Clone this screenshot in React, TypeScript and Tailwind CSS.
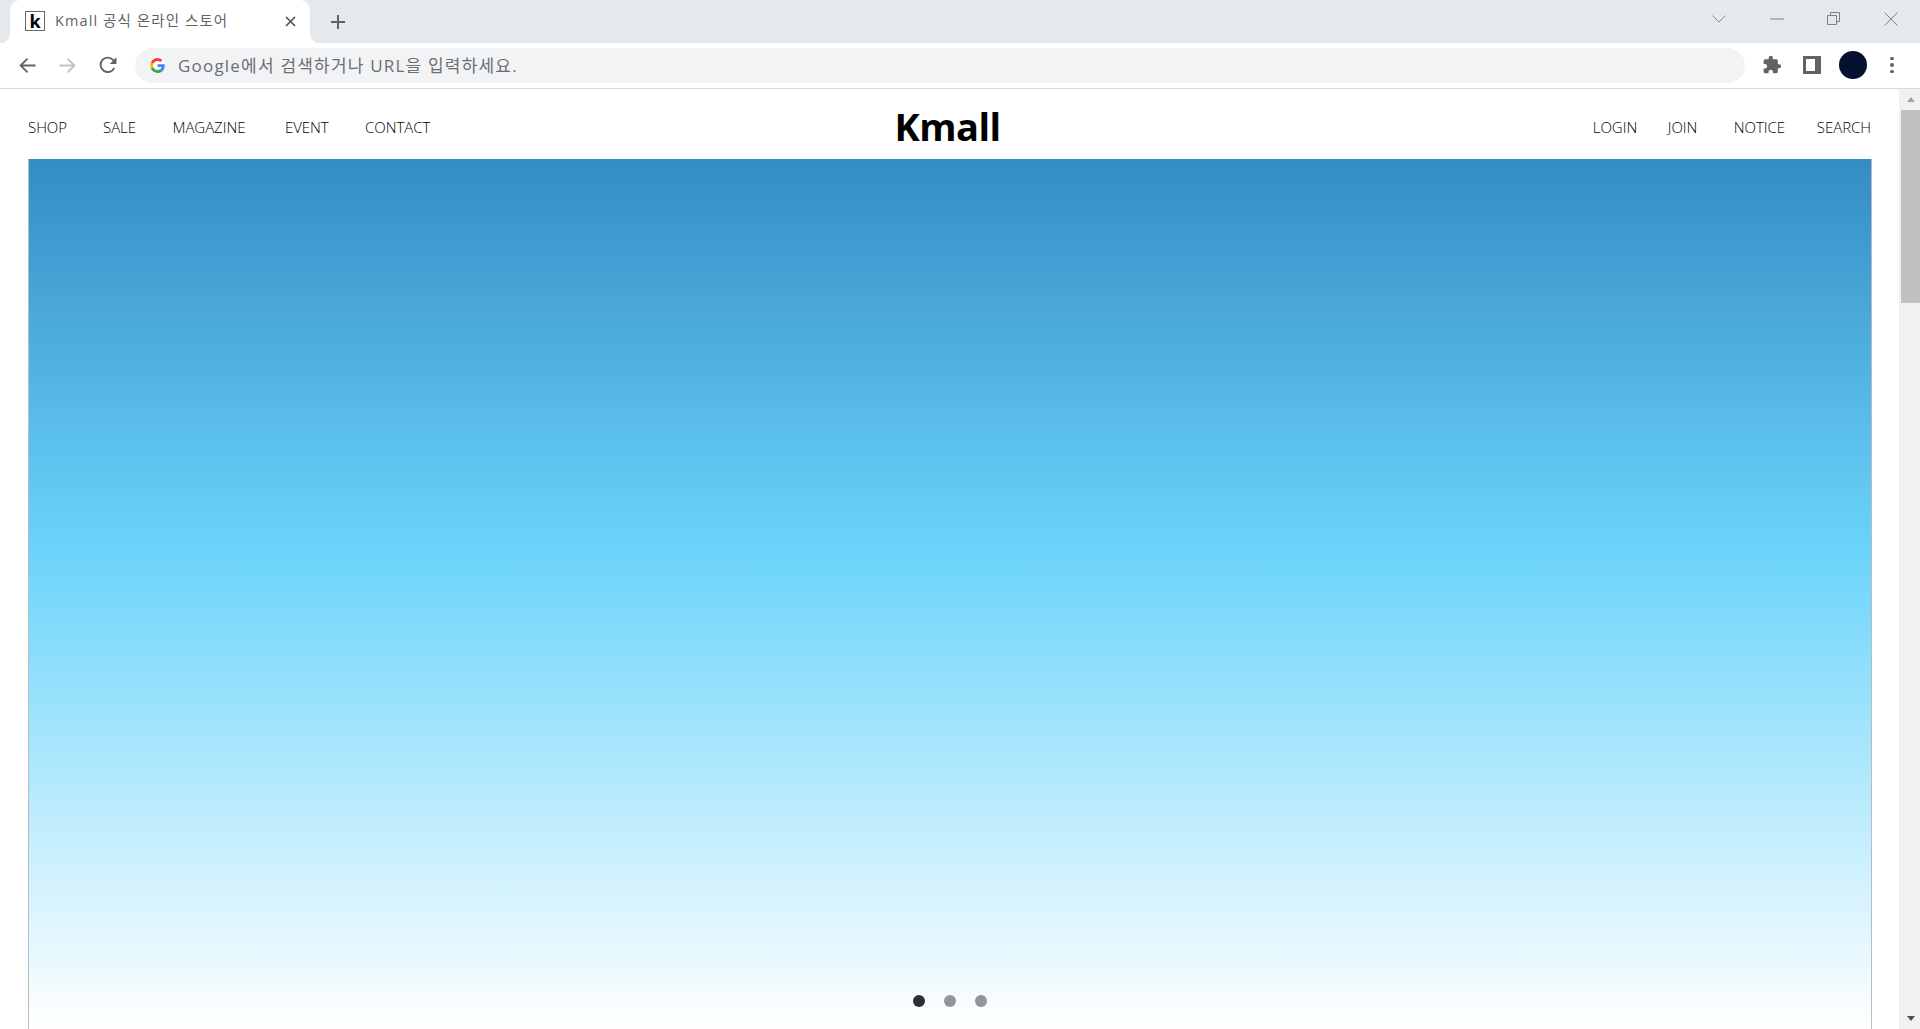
import { ReactNode } from 'react';

const leftMenu = [
  { label: 'SHOP', cls: 'w-[75px]' },
  { label: 'SALE', cls: 'w-[69.5px]' },
  { label: 'MAGAZINE', cls: 'w-[112.5px]' },
  { label: 'EVENT', cls: 'w-[80px]' },
  { label: 'CONTACT', cls: '' },
];
const rightMenu = [
  { label: 'LOGIN', cls: 'w-[75px]' },
  { label: 'JOIN', cls: 'w-[66px]' },
  { label: 'NOTICE', cls: 'w-[83px]' },
  { label: 'SEARCH', cls: '' },
];

function ToolIcon({ cls, children }: { cls: string; children: ReactNode }) {
  return <div className={`flex shrink-0 items-center justify-center ${cls}`}>{children}</div>;
}

function TabBar() {
  return (
    <div className="flex h-[43px] items-end bg-[#e6e9ec] pl-[10px]">
      <div className="relative flex h-[43px] w-[300px] shrink-0 items-center rounded-t-[10px] bg-white pb-[1px] pl-[15px]">
        {/* flared tab corners */}
        <svg className="absolute bottom-0 left-[-9px]" width="9" height="9" viewBox="0 0 9 9">
          <path d="M9 0v9H0a9 9 0 0 0 9-9z" fill="#fff" />
        </svg>
        <svg className="absolute bottom-0 right-[-9px]" width="9" height="9" viewBox="0 0 9 9">
          <path d="M0 0v9h9a9 9 0 0 1-9-9z" fill="#fff" />
        </svg>
        <div className="flex h-[20px] w-[20px] shrink-0 items-center justify-center border border-[#666] bg-white font-['Open_Sans',sans-serif] text-[18px] font-bold leading-none text-black">
          k
        </div>
        <span className="ml-[10px] font-['Open_Sans','Noto_Sans_CJK_KR',sans-serif] text-[14.5px] leading-none tracking-[1.1px] text-[#5f6368]">
          Kmall 공식 온라인 스토어
        </span>
        <svg className="absolute left-[275px] top-[16px]" width="11" height="11" viewBox="0 0 11 11">
          <path d="M1 1l9 9M10 1l-9 9" stroke="#4a4d52" strokeWidth="1.6" fill="none" />
        </svg>
      </div>
      <svg className="mb-[13px] ml-[20px]" width="16" height="16" viewBox="0 0 16 16">
        <path d="M8 1v14M1 8h14" stroke="#5f6368" strokeWidth="2" fill="none" />
      </svg>
      <div className="ml-auto flex h-full items-start">
        <svg className="ml-auto mt-[15px]" width="14" height="8" viewBox="0 0 14 8">
          <path d="M.5.5L7 7 13.500.5" stroke="#8a8d90" fill="none" />
        </svg>
        <svg className="ml-[44px] mt-[18px]" width="14" height="2" viewBox="0 0 14 2">
          <path d="M0 1h14" stroke="#808386" fill="none" />
        </svg>
        <svg className="ml-[43px] mt-[12px]" width="13" height="13" viewBox="0 0 13 13">
          <path d="M.5 3.500h9v9h-9zM3.500 3.500v-3h9v9h-3" stroke="#808386" fill="none" />
        </svg>
        <svg className="ml-[44px] mr-[22px] mt-[12px]" width="14" height="14" viewBox="0 0 14 14">
          <path d="M.5.5l13 13M13.500.5l-13 13" stroke="#808386" fill="none" />
        </svg>
      </div>
    </div>
  );
}

function ToolBar() {
  return (
    <div className="flex h-[46px] items-center border-b border-[#d8dadc] bg-white pb-[1px]">
      <ToolIcon cls="ml-[19px] w-[17px]">
        <svg width="17" height="17" viewBox="0 0 16 16">
          <path d="M15.500 8H1.800M8 1.500L1.500 8 8 14.500" stroke="#5f6368" strokeWidth="1.700" fill="none" />
        </svg>
      </ToolIcon>
      <ToolIcon cls="ml-[23px] w-[17px]">
        <svg width="17" height="17" viewBox="0 0 16 16">
          <path d="M.5 8h13.700M8 1.500L14.500 8 8 14.500" stroke="#bdc1c6" strokeWidth="1.700" fill="none" />
        </svg>
      </ToolIcon>
      <ToolIcon cls="ml-[23px] w-[18px]">
        <svg width="18" height="18" viewBox="0 0 16 16">
          <path d="M13.600 10.600A6.400 6.400 0 1 1 12.500 3.500L14.500 5.500" stroke="#5f6368" strokeWidth="1.700" fill="none" />
          <path d="M15.500 1v6h-6z" fill="#5f6368" />
        </svg>
      </ToolIcon>
      <div className="ml-[18px] flex h-[35px] min-w-0 flex-1 items-center rounded-full bg-[#f1f3f4] pl-[14px]">
        <div className="flex h-[16px] w-[16px] shrink-0 items-center justify-center rounded-full bg-white">
          <svg width="15" height="15" viewBox="0 0 48 48">
            <path fill="#EA4335" d="M24 9.500c3.540 0 6.710 1.220 9.210 3.600l6.850-6.850C35.900 2.380 30.470 0 24 0 14.620 0 6.510 5.380 2.560 13.220l7.980 6.190C12.430 13.720 17.740 9.500 24 9.500z" />
            <path fill="#4285F4" d="M46.980 24.550c0-1.570-.15-3.090-.38-4.550H24v9.020h12.940c-.58 2.960-2.260 5.480-4.780 7.180l7.730 6c4.510-4.180 7.090-10.360 7.090-17.650z" />
            <path fill="#FBBC05" d="M10.530 28.590c-.48-1.450-.76-2.990-.76-4.590s.27-3.140.76-4.590l-7.980-6.190C.92 16.460 0 20.120 0 24c0 3.880.92 7.540 2.560 10.780l7.970-6.190z" />
            <path fill="#34A853" d="M24 48c6.480 0 11.930-2.130 15.890-5.810l-7.730-6c-2.150 1.450-4.920 2.300-8.160 2.300-6.260 0-11.570-4.220-13.470-9.910l-7.980 6.190C6.510 42.620 14.620 48 24 48z" />
          </svg>
        </div>
        <span className="ml-[13px] font-['Open_Sans','Noto_Sans_CJK_KR',sans-serif] text-[17px] leading-none tracking-[1.2px] text-[#6b6f74]">
          Google에서 검색하거나 URL을 입력하세요.
        </span>
      </div>
      <ToolIcon cls="ml-[17px] w-[20px]">
        <svg width="20" height="20" viewBox="0 0 24 24">
          <path
            fill="#5f6368"
            d="M20.500 11H19V7a2 2 0 0 0-2-2h-4V3.500a2.500 2.500 0 0 0-5 0V5H4a2 2 0 0 0-2 2v3.800h1.500a2.700 2.700 0 0 1 0 5.400H2V20a2 2 0 0 0 2 2h3.800v-1.500a2.700 2.700 0 0 1 5.400 0V22H17a2 2 0 0 0 2-2v-4h1.500a2.500 2.500 0 0 0 0-5z"
          />
        </svg>
      </ToolIcon>
      <div className="ml-[21px] flex h-[18px] w-[18px] shrink-0 border-[3px] border-r-[6px] border-[#5f6368] bg-white" />
      <div className="ml-[18px] h-[28px] w-[28px] shrink-0 rounded-full bg-[#04102e]" />
      <div className="ml-[23px] flex flex-col gap-[3px]">
        <div className="h-[3.500px] w-[3.500px] rounded-full bg-[#5f6368]" />
        <div className="h-[3.500px] w-[3.500px] rounded-full bg-[#5f6368]" />
        <div className="h-[3.500px] w-[3.500px] rounded-full bg-[#5f6368]" />
      </div>
      <div className="w-[26.500px] shrink-0" />
    </div>
  );
}

function Menu({ items }: { items: { label: string; cls: string }[] }) {
  return (
    <ul className="flex font-['Open_Sans',sans-serif] text-[15px] font-[350] tracking-[-0.05px] text-black">
      {items.map((item) => (
        <li key={item.label} className={item.cls}>
          {item.label}
        </li>
      ))}
    </ul>
  );
}

function Scrollbar() {
  return (
    <div className="flex w-[21px] shrink-0 flex-col bg-[#f1f1f1] pl-[2px]">
      <div className="flex h-[21px] items-center justify-center">
        <div className="h-0 w-0 border-x-[4.500px] border-b-[5px] border-x-transparent border-b-[#a3a3a3]" />
      </div>
      <div className="h-[193px] bg-[#c1c1c1]" />
      <div className="flex-1" />
      <div className="flex h-[21px] items-center justify-center">
        <div className="h-0 w-0 border-x-[4.500px] border-t-[5px] border-x-transparent border-t-[#505050]" />
      </div>
    </div>
  );
}

export default function App() {
  return (
    <div className="flex h-[1029px] flex-col overflow-hidden bg-white">
      <TabBar />
      <ToolBar />
      <div className="flex min-h-0 flex-1">
        <main className="flex min-w-0 flex-1 flex-col">
          {/* Header */}
          <header className="grid h-[70px] shrink-0 grid-cols-[1fr_auto_1fr] items-center pl-[28px] pr-[28px] pt-[6px]">
            <Menu items={leftMenu} />
            <h1 className="mb-[2px] mr-[4px] font-['Open_Sans',sans-serif] text-[38px] font-bold leading-none tracking-[-0.5px] text-black">
              Kmall
            </h1>
            <div className="flex justify-end">
              <Menu items={rightMenu} />
            </div>
          </header>

          {/* Hero slider */}
          <section className="ml-[28px] mr-[27px] flex min-h-0 flex-1 flex-col justify-end border-x border-[#b8bcbf] bg-[linear-gradient(to_bottom,#348cc4_0%,#6bd4fb_45%,#ffffff_100%)] pb-[22px]">
            <div className="flex justify-center gap-[19px] pr-[1px]">
              <div className="h-[12px] w-[12px] rounded-full bg-[#2e3133]" />
              <div className="h-[12px] w-[12px] rounded-full bg-[#929699]" />
              <div className="h-[12px] w-[12px] rounded-full bg-[#929699]" />
            </div>
          </section>
        </main>
        <Scrollbar />
      </div>
    </div>
  );
}
